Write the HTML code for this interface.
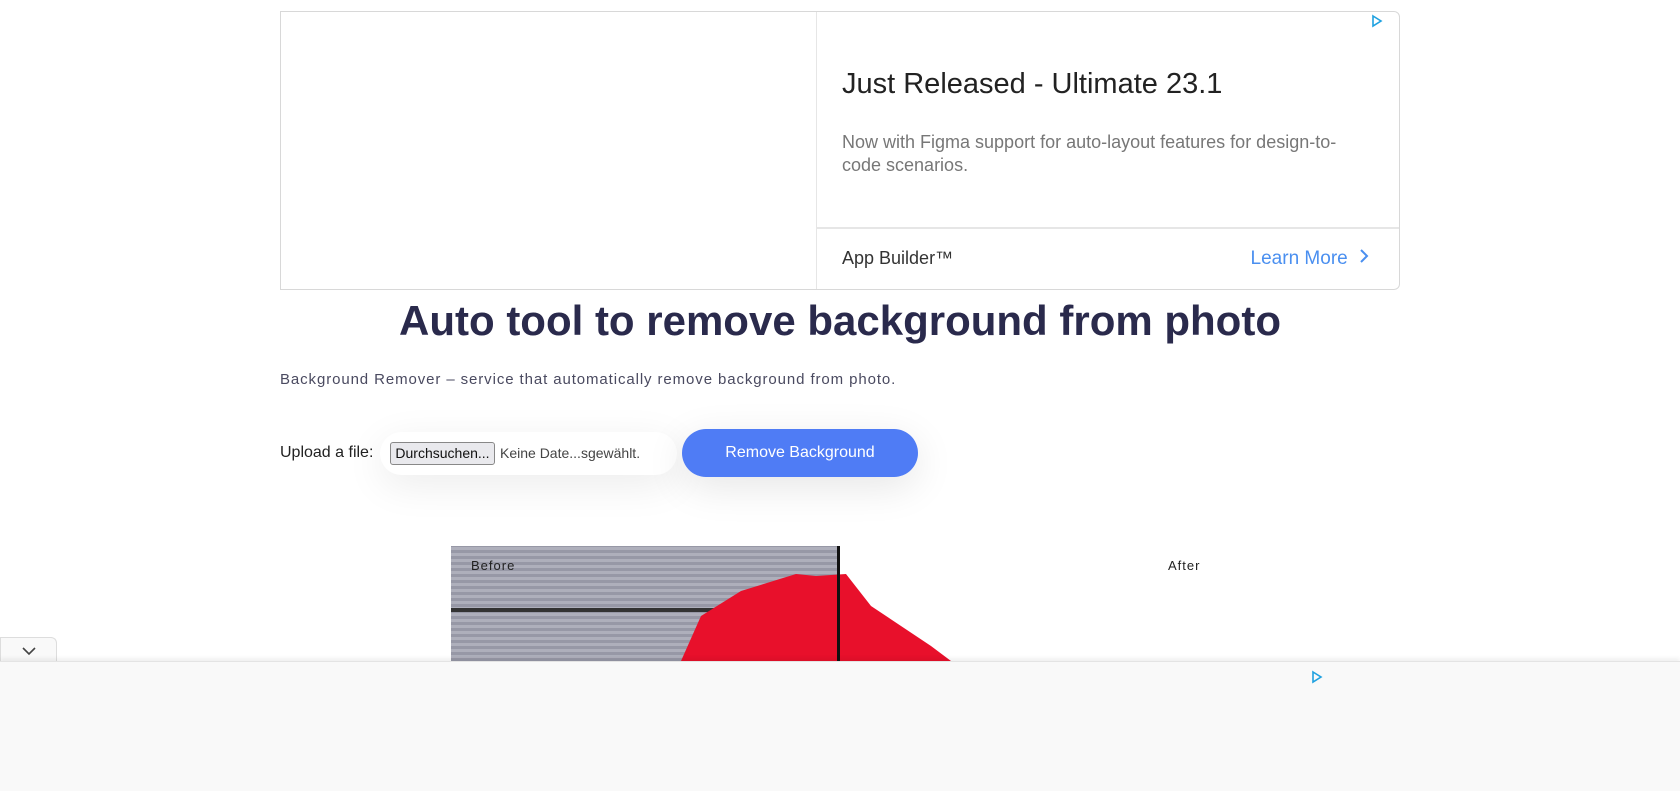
<!DOCTYPE html>
<html><head><meta charset="utf-8"><style>
*{margin:0;padding:0;box-sizing:border-box}
body{width:1680px;height:791px;overflow:hidden;background:#fff;font-family:"Liberation Sans",sans-serif;position:relative}
.ad{position:absolute;left:280px;top:11px;width:1120px;height:279px;border:1px solid #d8d8d8;border-radius:0 6px 6px 0}
.vd{position:absolute;left:535px;top:0;bottom:0;width:1px;background:#e6e6e6}
.hd{position:absolute;left:535px;right:0;top:215px;height:2px;background:#e6e6e6}
.h{position:absolute;left:561px;top:56px;font-size:29px;color:#222}
.d{position:absolute;left:561px;top:119px;width:500px;font-size:18px;line-height:23px;color:#777}
.ab{position:absolute;left:561px;top:236px;font-size:18px;color:#333}
.lm{position:absolute;right:30px;top:236px;font-size:19px;color:#4a8ff0}
.title{position:absolute;left:0;width:1680px;text-align:center;top:297px;font-size:42px;font-weight:bold;color:#2a2a4c}
.sub{position:absolute;left:280px;top:371px;font-size:15px;color:#4a4a60;letter-spacing:0.9px}
.up{position:absolute;left:280px;top:444px;font-size:16px;color:#222}
.fi{position:absolute;left:380px;top:432px;width:297px;height:43px;border-radius:22px;background:#fff;box-shadow:0 10px 40px rgba(0,0,0,.08)}
.fb{position:absolute;left:10px;top:10px;height:23px;width:105px;border:1px solid #888;border-radius:3px;background:#e9e9ed;font-size:14px;line-height:21px;text-align:center;color:#111}
.ft{position:absolute;left:120px;top:13px;font-size:14px;color:#444}
.btn{position:absolute;left:682px;top:429px;width:236px;height:48px;border-radius:24px;background:#4f7cf5;color:#fff;font-size:16px;line-height:48px;text-align:center;box-shadow:0 10px 40px rgba(0,0,0,.1)}
.img{position:absolute;left:451px;top:546px;width:388px;height:115px;background:repeating-linear-gradient(0deg,#9798a6 0 3px,#aeafbb 3px 6px)}
.plank{position:absolute;left:0;right:0;top:62px;height:4px;background:#333}
.line{position:absolute;left:837px;top:546px;width:3px;height:115px;background:#111}
.lbl{position:absolute;font-size:13px;letter-spacing:1px;color:#222}
.bot{position:absolute;left:0;top:661px;width:1680px;height:130px;background:#f9f9f9;border-top:1px solid #e4e4e4;box-shadow:0 -3px 4px rgba(0,0,0,.06)}
.tab{position:absolute;left:0;top:637px;width:57px;height:25px;background:#f9f9f9;border:1px solid #ddd;border-bottom:none;border-radius:0 6px 0 0}
</style></head><body>
<div class="ad">
<div class="vd"></div><div class="hd"></div>
<svg style="position:absolute;right:16px;top:2px" width="12" height="14" viewBox="0 0 12 14"><path d="M2 2 L10 7 L2 12 Z" fill="none" stroke="#1fa1e0" stroke-width="1.6"/></svg>
<div class="h">Just Released - Ultimate 23.1</div>
<div class="d">Now with Figma support for auto-layout features for design-to-code scenarios.</div>
<div class="ab">App Builder™</div>
<div class="lm">Learn More <svg width="10" height="16" viewBox="0 0 10 16" style="margin-left:6px"><path d="M2 2 L8 8 L2 14" fill="none" stroke="#4a8ff0" stroke-width="2"/></svg></div>
</div>
<div class="title">Auto tool to remove background from photo</div>
<div class="sub">Background Remover – service that automatically remove background from photo.</div>
<div class="up">Upload a file:</div>
<div class="fi"><div class="fb">Durchsuchen...</div><div class="ft">Keine Date...sgewählt.</div></div>
<div class="btn">Remove Background</div>
<div class="img"><div class="plank"></div></div>
<svg style="position:absolute;left:451px;top:546px" width="600" height="115" viewBox="0 0 600 115"><path d="M230 115 L250 70 L290 45 L345 28 L365 30 L395 28 L420 60 L480 100 L500 115 Z" fill="#e8102b"/></svg>
<div class="line"></div>
<div class="lbl" style="left:471px;top:558px">Before</div>
<div class="lbl" style="left:1168px;top:558px">After</div>
<div class="tab"><svg style="position:absolute;left:20px;top:8px" width="16" height="10" viewBox="0 0 16 10"><path d="M2 2 L8 8 L14 2" fill="none" stroke="#444" stroke-width="1.6"/></svg></div>
<div class="bot"><svg style="position:absolute;left:1311px;top:8px" width="12" height="14" viewBox="0 0 12 14"><path d="M2 2 L10 7 L2 12 Z" fill="none" stroke="#1fa1e0" stroke-width="1.6"/></svg></div>
</body></html>
